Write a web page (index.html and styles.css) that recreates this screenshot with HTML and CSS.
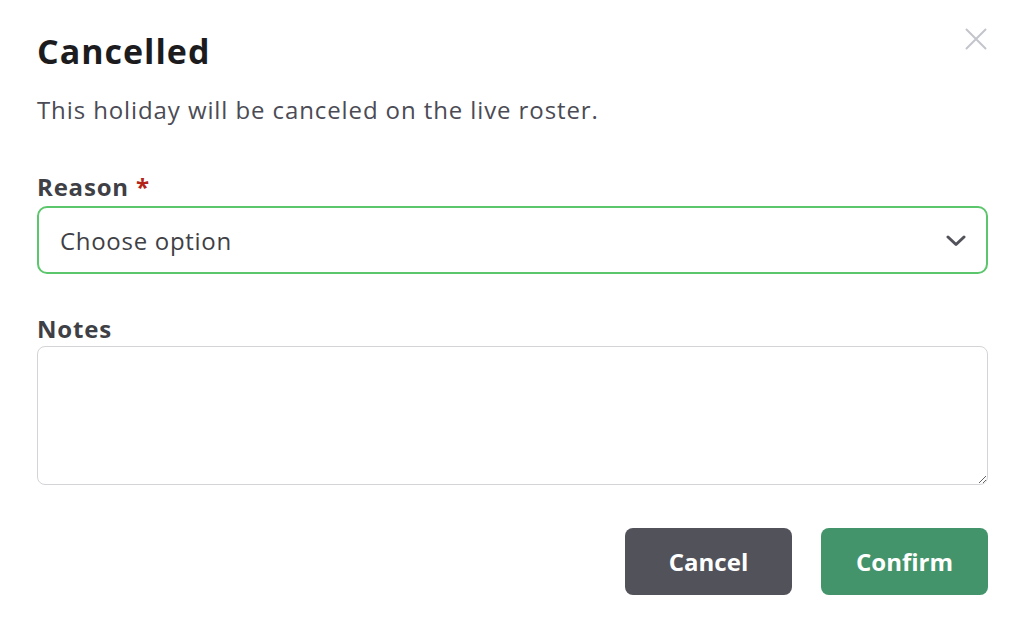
FILE: index.html
```html
<!DOCTYPE html>
<html lang="en">
<head>
    <meta charset="UTF-8">
    <meta name="viewport" content="width=device-width, initial-scale=1.0">
    <link rel="stylesheet" href="styles.css">
    <title>Cancelled</title>
</head>
<body>

    <div class="modal">
        <div class="modal-head">
            <h1 class="modal-title">Cancelled</h1>
            <button class="close-btn" type="button" aria-label="Close">
                <svg width="22" height="22" viewBox="0 0 22 22" fill="none" stroke="#c4c5cc" stroke-width="2" stroke-linecap="round">
                    <path d="M1.5 1.5 L20.5 20.5 M20.5 1.5 L1.5 20.5"/>
                </svg>
            </button>
        </div>
        <p class="modal-text">This holiday will be canceled on the live roster.</p>

        <form class="modal-form">
            <label class="field-label" for="reason">Reason <span class="required">*</span></label>
            <div class="select-wrap">
                <select id="reason" name="reason">
                    <option>Choose option</option>
                </select>
                <svg class="chevron" width="20" height="12" viewBox="0 0 20 12" fill="none" stroke="#52525b" stroke-width="3" stroke-linecap="round" stroke-linejoin="round">
                    <path d="M2 2 L10 9.5 L18 2"/>
                </svg>
            </div>

            <label class="field-label notes-label" for="notes">Notes</label>
            <textarea id="notes" name="notes"></textarea>

            <div class="actions">
                <button type="button" class="btn btn-cancel">Cancel</button>
                <button type="button" class="btn btn-confirm">Confirm</button>
            </div>
        </form>
    </div>

</body>
</html>
```

FILE: styles.css
```css
body {
    margin: 0;
    font-family: "Open Sans", Arial, sans-serif;
    background-color: #fff;
    color: #1c1c1f;
}

.modal {
    width: 951px;
    padding: 24px 35px 0 37px;
}

.modal-head {
    display: flex;
    justify-content: space-between;
    align-items: flex-start;
}

.modal-title {
    margin: 0;
    font-size: 34px;
    font-weight: 700;
    line-height: 54px;
    letter-spacing: 1px;
    color: #1c1c1f;
}

.close-btn {
    background: none;
    border: none;
    padding: 0;
    margin-top: 4px;
    margin-right: 1px;
    cursor: pointer;
}

.modal-text {
    margin: 16px 0 0;
    font-size: 24px;
    line-height: 32px;
    letter-spacing: 0.9px;
    color: #4b4b55;
}

.modal-form {
    margin-top: 45px;
}

.field-label {
    display: block;
    font-size: 24px;
    font-weight: 700;
    line-height: 32px;
    letter-spacing: 0.8px;
    color: #3f3f46;
    margin-bottom: 3px;
}

.required {
    color: #b42318;
}

.select-wrap {
    position: relative;
}

select {
    width: 100%;
    height: 68px;
    box-sizing: border-box;
    appearance: none;
    border: 2px solid #5cc66c;
    border-radius: 10px;
    background-color: #fff;
    padding: 0 21px;
    font-family: inherit;
    font-size: 24px;
    letter-spacing: 0.7px;
    color: #3f3f46;
    outline: none;
}

.chevron {
    position: absolute;
    right: 22px;
    top: 29px;
    pointer-events: none;
}

.notes-label {
    margin-top: 39px;
    margin-bottom: 1px;
}

textarea {
    display: block;
    width: 100%;
    height: 139px;
    box-sizing: border-box;
    border: 1px solid #d4d4d8;
    border-radius: 8px;
    font-family: inherit;
    font-size: 20px;
    padding: 10px 14px;
    resize: vertical;
}

.actions {
    display: flex;
    justify-content: flex-end;
    gap: 29px;
    margin-top: 43px;
}

.btn {
    width: 167px;
    height: 67px;
    border: none;
    border-radius: 8px;
    color: #fff;
    font-family: inherit;
    font-size: 24px;
    font-weight: 700;
    cursor: pointer;
}

.btn-cancel {
    background-color: #52525b;
}

.btn-confirm {
    background-color: #43946b;
}
```
